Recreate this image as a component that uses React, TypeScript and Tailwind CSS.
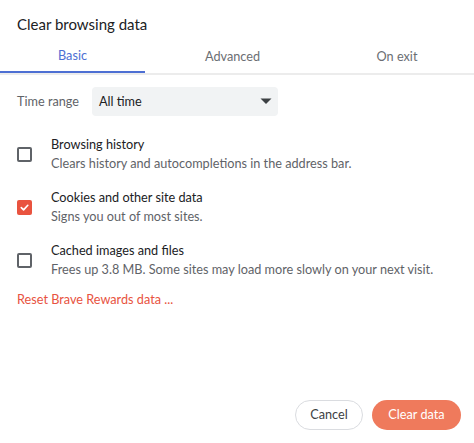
import React from "react";

const items = [
  { title: "Browsing history", desc: "Clears history and autocompletions in the address bar.", checked: false },
  { title: "Cookies and other site data", desc: "Signs you out of most sites.", checked: true },
  { title: "Cached images and files", desc: "Frees up 3.8 MB. Some sites may load more slowly on your next visit.", checked: false },
];

function Checkbox({ checked }: { checked: boolean }) {
  if (checked) {
    return (
      <div className="w-[15px] h-[15px] rounded-[2px] bg-[#e9533f] flex items-center justify-center">
        <svg width="11" height="11" viewBox="0 0 12 12" fill="none">
          <path d="M2.5 6.2 L5 8.6 L9.6 3.6" stroke="white" strokeWidth="1.8" strokeLinecap="round" strokeLinejoin="round" />
        </svg>
      </div>
    );
  }
  return <div className="w-[15px] h-[15px] rounded-[2px] border-2 border-[#5f6368]" />;
}

export default function App() {
  return (
    <div className="w-[474px] h-[443px] bg-white flex flex-col font-['Lato','Noto_Sans',sans-serif] text-[#202124]">
      <h1 className="pl-[17px] pt-[14px] text-[15px] leading-[20px] text-[#202124]">Clear browsing data</h1>

      <div className="flex mt-[6px] border-b-2 border-[#ececec] text-[12.7px]">
        <div className="w-[145px] h-[33px] flex items-center justify-center text-[#4d6fd3] border-b-2 border-[#4d6fd3] -mb-[2px]">
          Basic
        </div>
        <div className="w-[175px] h-[33px] flex items-center justify-center text-[#6b6e73]">Advanced</div>
        <div className="flex-1 h-[33px] flex items-center justify-center text-[#6b6e73]">On exit</div>
      </div>

      <div className="flex items-center mt-[12px] pl-[17px] text-[12.7px]">
        <span className="w-[75px] text-[#5f6368]">Time range</span>
        <div className="w-[186px] h-[29px] rounded-[4px] bg-[#f1f3f4] flex items-center justify-between pl-[7px] pr-[6px]">
          <span className="text-[#202124]">All time</span>
          <svg width="12" height="7" viewBox="0 0 12 7">
            <path d="M0.5 0.5 L11.5 0.5 L6 6 Z" fill="#3c4043" />
          </svg>
        </div>
      </div>

      <div className="flex flex-col gap-[15px] mt-[19px]">
        {items.map((it) => (
          <div key={it.title} className="flex items-center pl-[17px]">
            <div className="w-[34px]">
              <Checkbox checked={it.checked} />
            </div>
            <div className="flex flex-col text-[12.7px] leading-[19px]">
              <span className="text-[#202124]">{it.title}</span>
              <span className="text-[#5f6368]">{it.desc}</span>
            </div>
          </div>
        ))}
      </div>

      <div className="pl-[17px] mt-[11px] text-[12.7px] text-[#e8533f]">Reset Brave Rewards data ...</div>

      <div className="flex-1" />

      <div className="flex justify-end gap-[9px] pr-[13px] pb-[13px]">
        <button className="w-[68px] h-[30px] rounded-full border border-[#dadce0] text-[12.7px] text-[#3c4043] bg-white">
          Cancel
        </button>
        <button className="w-[89px] h-[30px] rounded-full bg-[#ef7a5c] text-[12.7px] text-white">
          Clear data
        </button>
      </div>
    </div>
  );
}
